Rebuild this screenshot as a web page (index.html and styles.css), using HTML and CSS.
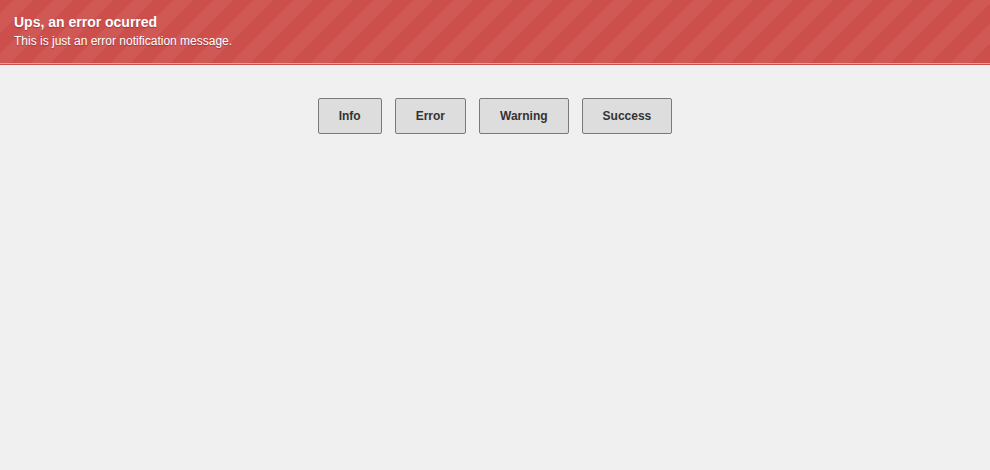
FILE: index.html
```html
<!DOCTYPE html>
<html>
<head>
<meta charset="utf-8">
<link rel="stylesheet" href="styles.css">
</head>
<body>
<div class="notification notification-error">
  <div class="notification-title">Ups, an error ocurred</div>
  <div class="notification-message">This is just an error notification message.</div>
</div>
<div class="controls">
  <button class="btn">Info</button>
  <button class="btn">Error</button>
  <button class="btn">Warning</button>
  <button class="btn">Success</button>
</div>
</body>
</html>
```
FILE: styles.css
```css
html, body {
  margin: 0;
  padding: 0;
}
body {
  background: #f0f0f0;
  font-family: "Liberation Sans", Arial, sans-serif;
  width: 990px;
  height: 470px;
  overflow: hidden;
}
.notification {
  box-sizing: border-box;
  height: 64px;
  padding: 14px 14px 0;
  color: #fff;
  text-shadow: 0 1px 1px rgba(90, 20, 40, 0.45);
  border-bottom: 1px solid #ec9e9b;
  box-shadow: 0 1px 0 #cd4f4b;
}
.notification-error {
  background-color: #cd4f4b;
  background-image: repeating-linear-gradient(
    -45deg,
    rgba(255, 255, 255, 0) 0,
    rgba(255, 255, 255, 0) 14.14px,
    rgba(255, 255, 255, 0.055) 14.14px,
    rgba(255, 255, 255, 0.055) 28.28px
  );
}
.notification-title {
  font-size: 14px;
  font-weight: bold;
  line-height: 17px;
}
.notification-message {
  font-size: 12px;
  line-height: 15px;
  margin-top: 3px;
}
.controls {
  display: flex;
  justify-content: center;
  gap: 13px;
  margin-top: 34px;
}
.btn {
  box-sizing: border-box;
  height: 36px;
  padding: 0 20px;
  background: #dddddd;
  border: 1px solid #7a7a7a;
  border-radius: 2px;
  font-family: "Liberation Sans", Arial, sans-serif;
  font-size: 12px;
  font-weight: bold;
  color: #333;
  cursor: pointer;
}
```
